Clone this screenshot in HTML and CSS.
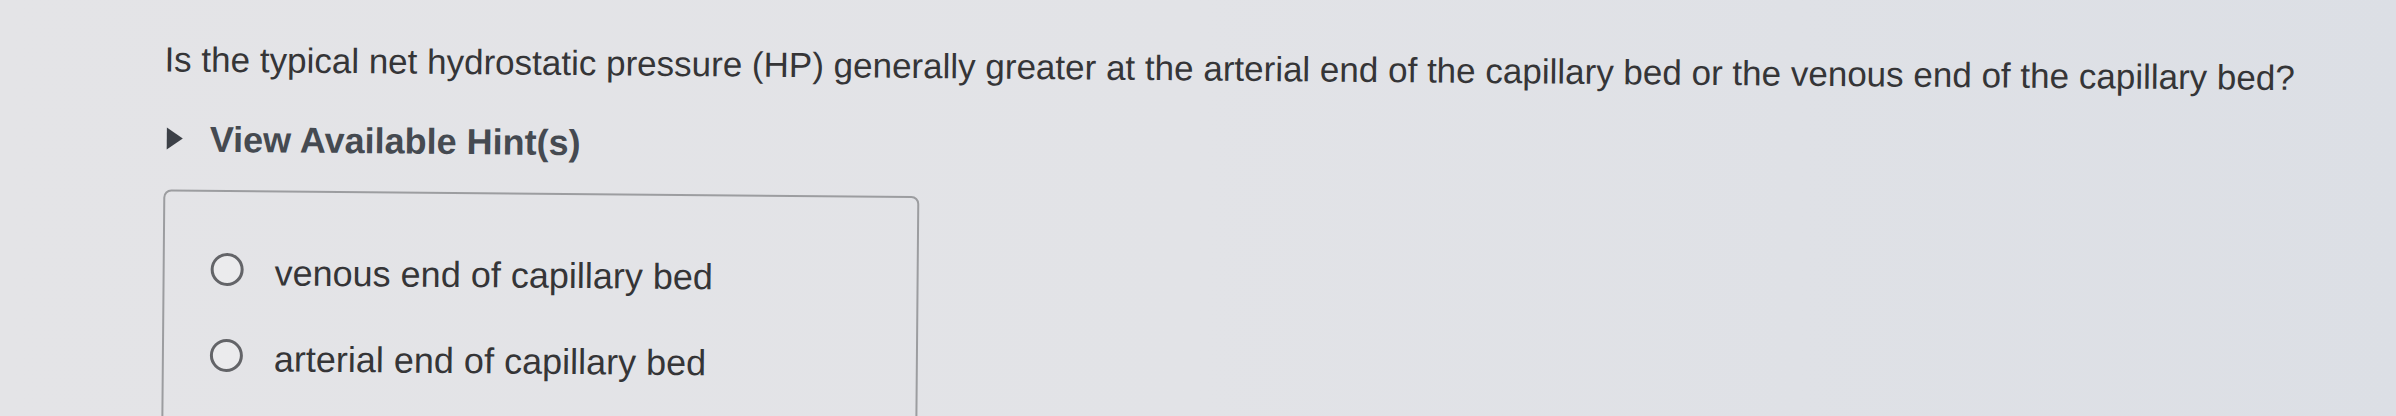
FILE: index.html
```html
<!DOCTYPE html>
<html lang="en">
<head>
<meta charset="UTF-8">
<title>Question</title>
<link rel="stylesheet" href="styles.css">
</head>
<body>
<div class="page">
    <p class="question">Is the typical net hydrostatic pressure (HP) generally greater at the arterial end of the capillary bed or the venous end of the capillary bed?</p>
    <div class="hints">
        <span class="arrow"></span>
        <span class="hints-label">View Available Hint(s)</span>
    </div>
    <div class="answers">
        <label class="answer">
            <span class="radio"></span>
            <span>venous end of capillary bed</span>
        </label>
        <label class="answer">
            <span class="radio"></span>
            <span>arterial end of capillary bed</span>
        </label>
    </div>
</div>
</body>
</html>
```

FILE: styles.css
```css
html, body {
    margin: 0;
    height: 100%;
}
body {
    background: linear-gradient(90deg, #e4e4e7 0%, #e2e3e7 50%, #dcdfe5 100%);
    color: #353537;
    font-family: "Liberation Sans", Arial, sans-serif;
    font-size: 36px;
    line-height: 43px;
    overflow: hidden;
}
.page {
    padding: 36px 0 0 165px;
    transform: rotate(0.5deg);
    transform-origin: 0 0;
}
.question {
    margin: 0;
    font-size: 35px;
}
.hints {
    display: flex;
    align-items: center;
    margin-top: 37px;
    color: #454a51;
    font-weight: bold;
}
.arrow {
    width: 0;
    height: 0;
    margin: 0 27px 2px 3px;
    border-top: 11px solid transparent;
    border-bottom: 11px solid transparent;
    border-left: 16px solid #3c4047;
}
.answers {
    display: flex;
    flex-direction: column;
    gap: 43px;
    width: 756px;
    margin-top: 29px;
    padding: 59px 0 80px 46px;
    border: 2px solid #9c9da0;
    border-radius: 8px;
    box-sizing: border-box;
}
.answer {
    display: flex;
    align-items: flex-start;
    gap: 31px;
}
.radio {
    width: 33px;
    height: 33px;
    margin-top: 2px;
    border: 3px solid #636468;
    border-radius: 50%;
    box-sizing: border-box;
    background: #ebebed;
}
```
